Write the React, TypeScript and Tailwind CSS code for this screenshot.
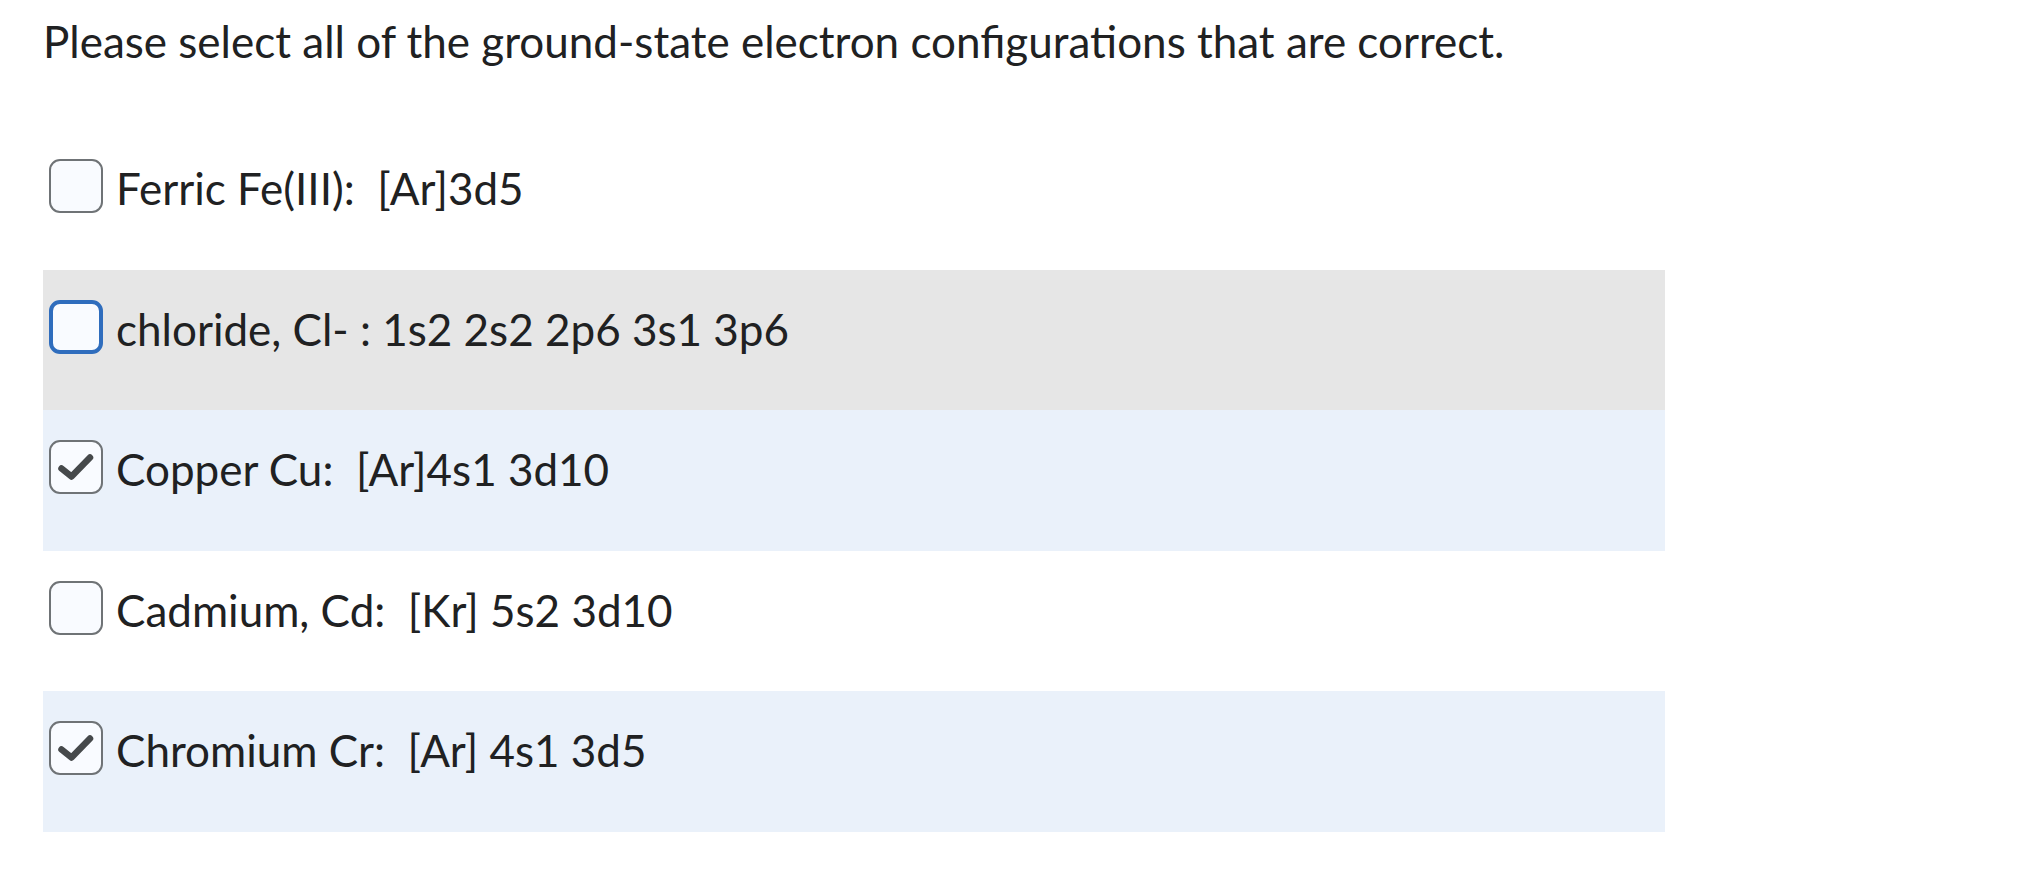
import React from 'react';

interface Choice {
  id: number;
  label: string;
  checked: boolean;
  focused?: boolean;
  tone: 'plain' | 'hover' | 'selected';
}

const choices: Choice[] = [
  { id: 1, label: 'Ferric Fe(III):  [Ar]3d5', checked: false, tone: 'plain' },
  { id: 2, label: 'chloride, Cl- : 1s2 2s2 2p6 3s1 3p6', checked: false, focused: true, tone: 'hover' },
  { id: 3, label: 'Copper Cu:  [Ar]4s1 3d10', checked: true, tone: 'selected' },
  { id: 4, label: 'Cadmium, Cd:  [Kr] 5s2 3d10', checked: false, tone: 'plain' },
  { id: 5, label: 'Chromium Cr:  [Ar] 4s1 3d5', checked: true, tone: 'selected' },
];

const Checkbox = ({ checked, focused }: { checked: boolean; focused?: boolean }) => (
  <span
    className={
      focused
        ? 'relative flex h-[54px] w-[54px] shrink-0 items-center justify-center rounded-[11px] border-[4px] border-[#2f6dbd] bg-[#f9fbff]'
        : 'relative flex h-[54px] w-[54px] shrink-0 items-center justify-center rounded-[11px] border-[2px] border-[#6f7376] bg-[#f9fbff]'
    }
  >
    {checked && (
      <svg className="absolute left-[-2px] top-[-2px]" width="54" height="54" viewBox="0 0 54 54">
        <path
          d="M12.5 28.5 L22.5 36.5 L41 17.5"
          fill="none"
          stroke="#46494b"
          strokeWidth="6.5"
          strokeLinecap="round"
          strokeLinejoin="round"
        />
      </svg>
    )}
  </span>
);

const App = () => {
  return (
    <div className="min-h-[876px] bg-white px-[43px] pt-[15px] font-['Lato',sans-serif] text-[#202122]">
      <p className="text-[44px] leading-[53px]">
        Please select all of the ground-state electron configurations that are correct.
      </p>

      <div className="mt-[61px] w-[1622px]">
        {choices.map((c) => (
          <label
            key={c.id}
            className={
              c.tone === 'hover'
                ? 'flex h-[140.5px] items-start gap-[13px] bg-[#e6e6e6] pl-[6px] pt-[30px]'
                : c.tone === 'selected'
                ? 'flex h-[140.5px] items-start gap-[13px] bg-[#eaf1fa] pl-[6px] pt-[30px]'
                : 'flex h-[140.5px] items-start gap-[13px] pl-[6px] pt-[30px]'
            }
          >
            <Checkbox checked={c.checked} focused={c.focused} />
            <span className="mt-[3px] whitespace-pre text-[44px] leading-[53px]">{c.label}</span>
          </label>
        ))}
      </div>
    </div>
  );
};

export default App;
